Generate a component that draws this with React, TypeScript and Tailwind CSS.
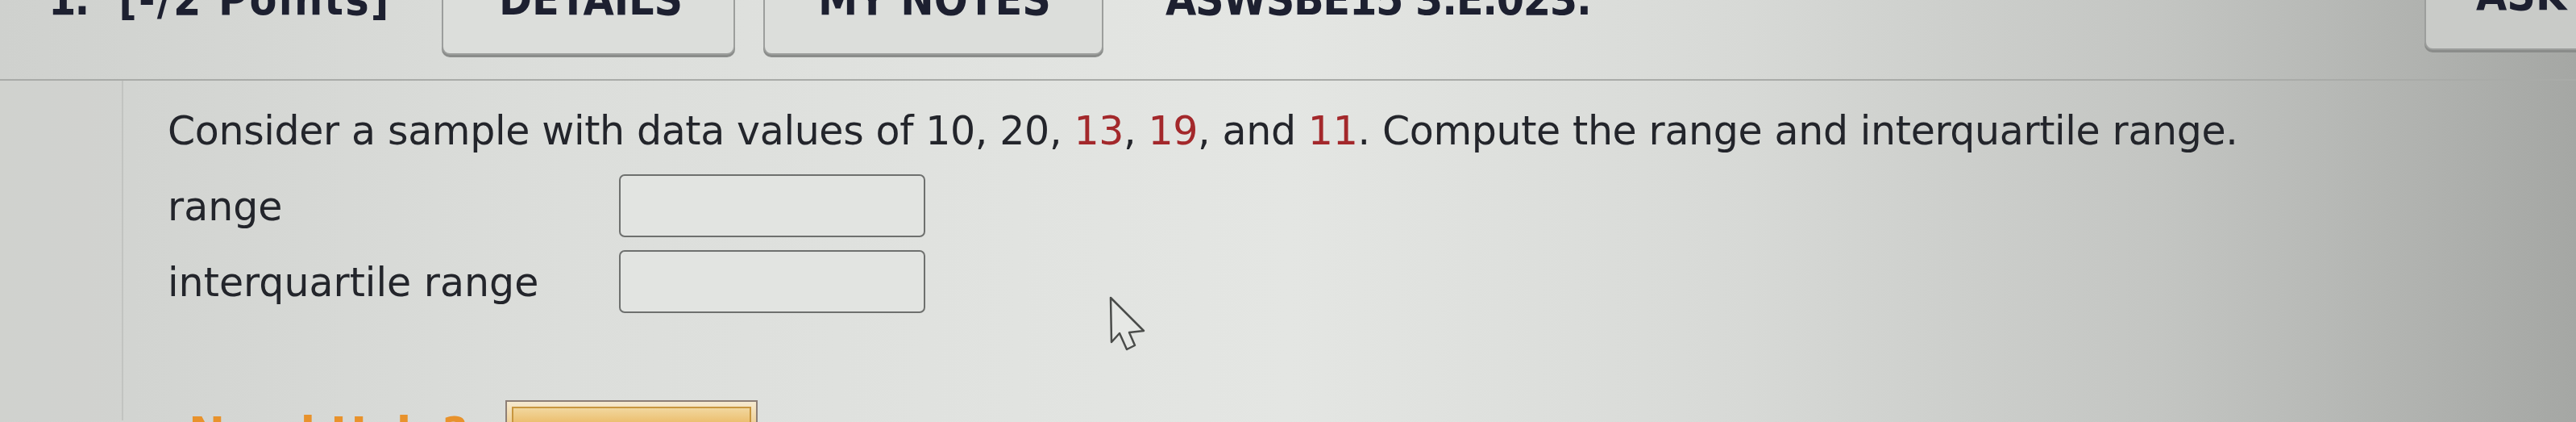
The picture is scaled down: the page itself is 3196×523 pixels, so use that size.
import React from "react";

const headerFont = { fontFamily: '"DejaVu Sans Condensed", "DejaVu Sans", sans-serif' };
const bodyFont = { fontFamily: '"DejaVu Sans", Verdana, sans-serif' };

function HeaderButton({ label, width, textPad }: { label: string; width: string; textPad: string }) {
  return (
    <div
      className={`${width} ${textPad} h-[108px] shrink-0 rounded-b-[10px] border-2 border-t-0 border-[#9c9e9c] bg-[#dcdedb] shadow-[0_3px_0_#8a8c8a] text-[#1d2030] text-[55px] leading-[55px] font-semibold whitespace-nowrap`}
    >
      {label}
    </div>
  );
}

function Cursor() {
  return (
    <svg className="absolute left-[1376px] top-[367px]" width="46" height="70" viewBox="0 0 46 70">
      <path
        d="M2 2 L3 57 L13 46 L22 66 L32 61 L25 45 L43 43 Z"
        fill="#e6e8e5"
        stroke="#4a4c4a"
        strokeWidth="2.5"
        strokeLinejoin="round"
      />
    </svg>
  );
}

export default function App() {
  return (
    <div className="relative w-[3196px] h-[523px] overflow-hidden bg-[linear-gradient(to_right,#cfd1ce_0%,#dcdedb_22%,#e4e6e3_50%,#d7d9d6_68%,#c3c5c2_84%,#a5a7a4_100%)]">
      {/* header strip */}
      <div className="h-[100px] overflow-hidden border-b-2 border-[#a9aba8]" style={headerFont}>
        <div className="flex items-start -mt-[40px] text-[#1d2030]">
          <div className="w-[548px] shrink-0 pl-[60px] pt-[12px] text-[55px] leading-[55px] font-semibold whitespace-nowrap">
            <span className="tracking-[-2px]">1.</span>
            <span className="ml-[38px] tracking-[2.2px]">[-/2 Points]</span>
          </div>
          <HeaderButton label="DETAILS" width="w-[364px]" textPad="pt-[12px] pl-[69px]" />
          <div className="ml-[35px]">
            <HeaderButton label="MY NOTES" width="w-[422px]" textPad="pt-[12px] pl-[66px]" />
          </div>
          <div className="ml-[77px] pt-[12px] text-[55px] leading-[55px] font-semibold whitespace-nowrap tracking-[-1.3px]">
            ASWSBE15 3.E.023.
          </div>
          <div className="ml-auto -mt-[6px]">
            <div className="w-[188px] h-[108px] rounded-bl-[10px] border-2 border-t-0 border-r-0 border-[#9c9e9c] bg-[#c9cbc8] shadow-[0_3px_0_#8a8c8a] pt-[12px] pl-[62px] text-[55px] leading-[55px] font-semibold text-[#1d2030]">
              ASK
            </div>
          </div>
        </div>
      </div>

      {/* content */}
      <div className="flex h-[421px]">
        <div className="w-[153px] shrink-0 border-r-2 border-[#c2c4c1] bg-[#d0d2cf]/60" />
        <div className="flex-1 pl-[55px] pt-[26px] text-[#23252b]" style={bodyFont}>
          <p className="text-[49px] whitespace-nowrap tracking-[-0.36px]">
            Consider a sample with data values of 10, 20,{" "}
            <span className="text-[#a3282b]">13</span>,{" "}
            <span className="text-[#a3282b]">19</span>, and{" "}
            <span className="text-[#a3282b]">11</span>. Compute the range and interquartile range.
          </p>

          <div className="mt-[16px] flex flex-col gap-[16px]">
            <div className="flex items-center">
              <span className="w-[560px] pt-[4px] text-[49px]">range</span>
              <div className="w-[380px] h-[78px] rounded-[7px] border-2 border-[#6e706e] bg-[#e2e4e1]" />
            </div>
            <div className="flex items-center">
              <span className="w-[560px] pt-[4px] text-[49px]">interquartile range</span>
              <div className="w-[380px] h-[78px] rounded-[7px] border-2 border-[#6e706e] bg-[#e2e4e1]" />
            </div>
          </div>

          <div className="mt-[108px] flex items-start">
            <span className="w-[419px] shrink-0 mt-[14px] pl-[26px] text-[54px] leading-none font-bold text-[#e8922c] whitespace-nowrap">
              Need Help?
            </span>
            <div className="w-[313px] h-[40px] border-2 border-b-0 border-[#8d7f76] bg-[linear-gradient(to_bottom,#f6ead0,#ecc47c)] p-[6px] pb-0">
              <div className="h-full border-2 border-b-0 border-[#c8963e] bg-[linear-gradient(to_bottom,#f1d79e,#e8ad4e)]" />
            </div>
          </div>
        </div>
      </div>

      <Cursor />
    </div>
  );
}
